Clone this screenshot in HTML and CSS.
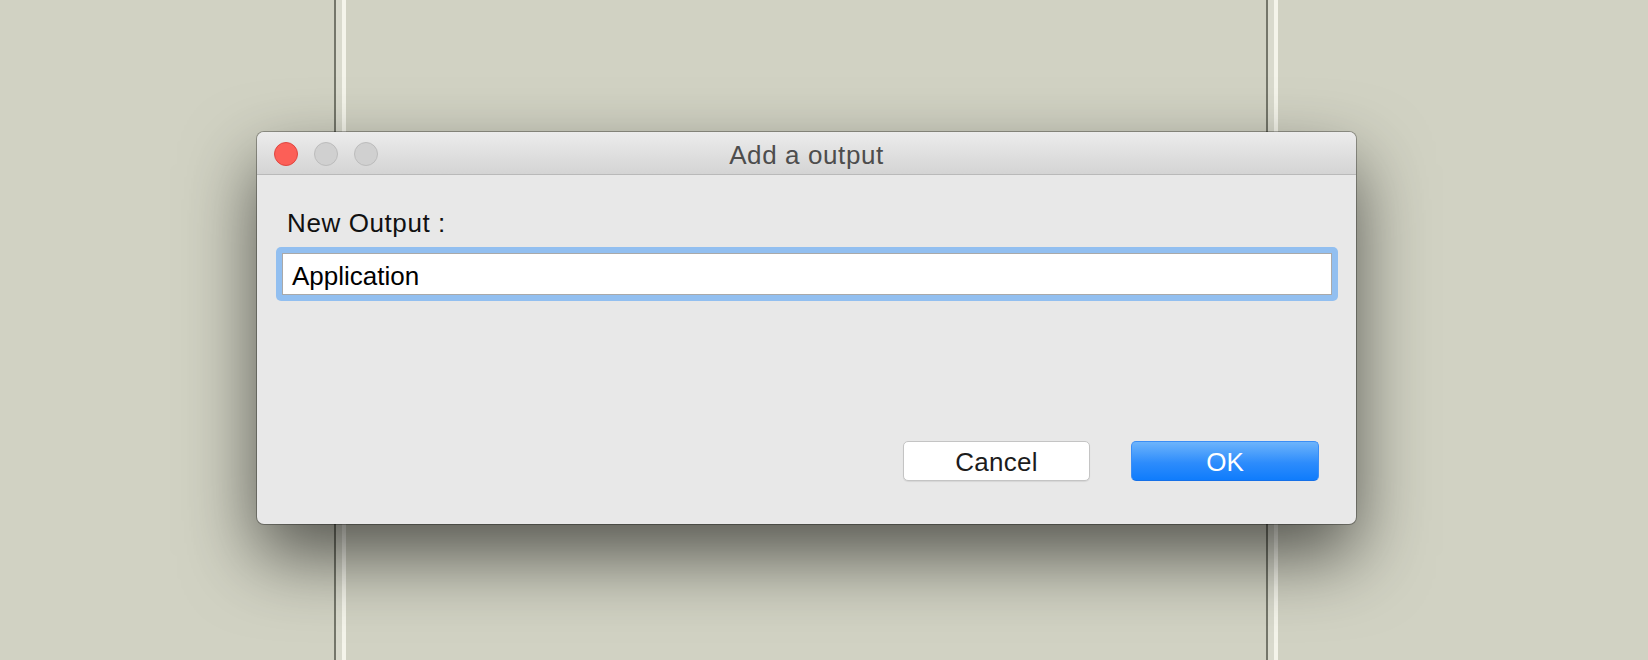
FILE: index.html
```html
<!DOCTYPE html>
<html>
<head>
<meta charset="utf-8">
<title>Add a output</title>
<link rel="stylesheet" href="styles.css">
</head>
<body>
<div class="window">
  <div class="titlebar">
    <div class="lights">
      <span class="light light-close"></span>
      <span class="light light-min"></span>
      <span class="light light-max"></span>
    </div>
    <div class="title">Add a output</div>
    <div></div>
  </div>
  <div class="content">
    <div class="label">New Output :</div>
    <div class="focus-ring">
      <div class="field">Application</div>
    </div>
    <div class="buttons">
      <div class="btn btn-cancel">Cancel</div>
      <div class="btn btn-ok">OK</div>
    </div>
  </div>
</div>
</body>
</html>
```

FILE: styles.css
```css
html, body {
  margin: 0;
  height: 100%;
}

body {
  width: 1648px;
  height: 660px;
  overflow: hidden;
  box-sizing: border-box;
  padding: 132px 0 0 257px;
  font-family: "Liberation Sans", Arial, sans-serif;
  background:
    linear-gradient(to right,
      transparent 334px,
      #74766a 334px, #74766a 336px,
      #d9dacd 336px, #d9dacd 342px,
      #f4f4ea 342px, #f4f4ea 346px,
      transparent 346px,
      transparent 1266px,
      #74766a 1266px, #74766a 1268px,
      #d9dacd 1268px, #d9dacd 1274px,
      #f4f4ea 1274px, #f4f4ea 1278px,
      transparent 1278px),
    #d1d2c3;
}

.window {
  width: 1099px;
  height: 392px;
  box-sizing: border-box;
  border-radius: 7px;
  background: #e8e8e8;
  box-shadow:
    0 0 0 1px rgba(0, 0, 0, 0.3),
    0 32px 72px rgba(0, 0, 0, 0.6);
  display: flex;
  flex-direction: column;
  overflow: hidden;
}

.titlebar {
  height: 43px;
  box-sizing: border-box;
  border-bottom: 1px solid #b9b9b9;
  background: linear-gradient(to bottom, #ececec, #d4d4d4);
  display: grid;
  grid-template-columns: 1fr auto 1fr;
}

.lights {
  display: flex;
  gap: 16px;
  padding-left: 17px;
  padding-top: 10px;
}

.light {
  width: 24px;
  height: 24px;
  box-sizing: border-box;
  border-radius: 50%;
  background: #d0d0d0;
  border: 1px solid #bcbcbc;
}

.light-close {
  background: #fc5f57;
  border-color: #df4640;
}

.title {
  font-size: 26px;
  letter-spacing: 0.6px;
  line-height: 43px;
  padding-top: 2px;
  color: #4d4d4d;
}

.content {
  flex: 1;
  display: flex;
  flex-direction: column;
  padding: 33px 18px 43px 19px;
}

.label {
  font-size: 26px;
  letter-spacing: 0.6px;
  line-height: 30px;
  color: #111;
  padding-left: 11px;
}

.focus-ring {
  margin-top: 9px;
  padding: 6px;
  border-radius: 5px;
  background: #92bff0;
}

.field {
  height: 42px;
  box-sizing: border-box;
  border: 1px solid #a9a9a9;
  background: #fff;
  font-size: 26px;
  line-height: 36px;
  padding: 4px 0 0 9px;
  color: #000;
}

.buttons {
  margin-top: auto;
  display: flex;
  justify-content: flex-end;
  gap: 41px;
  padding-right: 19px;
}

.btn {
  width: 188px;
  height: 40px;
  box-sizing: border-box;
  border-radius: 5px;
  font-size: 26px;
  line-height: 36px;
  padding-top: 2px;
  text-align: center;
}

.btn-cancel {
  width: 187px;
  background: #fff;
  border: 1px solid #c4c4c4;
  box-shadow: 0 1px 1px rgba(0, 0, 0, 0.08);
  color: #1c1c1c;
  letter-spacing: 0.3px;
}

.btn-ok {
  background: linear-gradient(to bottom, #6db4fb, #2d8cfc 55%, #0f7cfc);
  border: 1px solid #3b8ef5;
  border-bottom-color: #1570e8;
  color: #fff;
}
```
